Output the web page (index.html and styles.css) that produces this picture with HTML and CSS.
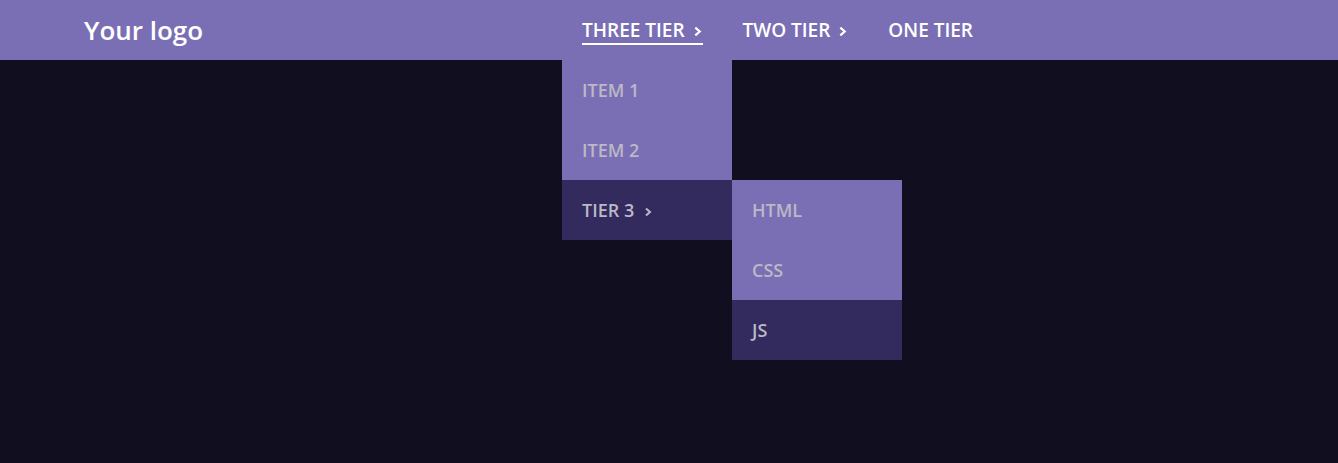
FILE: index.html
```html
<!DOCTYPE html>
<html lang="en">
<head>
    <meta charset="UTF-8">
    <meta name="viewport" content="width=device-width, initial-scale=1.0">
    <title>Multi tier menu</title>
    <link rel="stylesheet" href="styles.css">
</head>
<body>

    <header class="header">
        <div class="logo">Your logo</div>
        <nav>
            <ul class="menu">
                <!-- Menú de tres nivells -->
                <li class="menu-item active">
                    <a href="#">THREE TIER <svg class="chevron" viewBox="0 0 10 10"><path d="M3 1.5 L7 5 L3 8.5"/></svg></a>
                    <ul class="dropdown">
                        <li><a href="#">ITEM 1</a></li>
                        <li><a href="#">ITEM 2</a></li>
                        <li class="dark has-sub">
                            <a href="#">TIER 3 <svg class="chevron" viewBox="0 0 10 10"><path d="M3 1.5 L7 5 L3 8.5"/></svg></a>
                            <ul class="dropdown sub">
                                <li><a href="#">HTML</a></li>
                                <li><a href="#">CSS</a></li>
                                <li class="dark"><a href="#">JS</a></li>
                            </ul>
                        </li>
                    </ul>
                </li>
                <li class="menu-item">
                    <a href="#">TWO TIER <svg class="chevron" viewBox="0 0 10 10"><path d="M3 1.5 L7 5 L3 8.5"/></svg></a>
                </li>
                <li class="menu-item">
                    <a href="#">ONE TIER</a>
                </li>
            </ul>
        </nav>
    </header>

</body>
</html>
```

FILE: styles.css
```css
body {
    font-family: "Open Sans", sans-serif;
    background-color: #100e1f;
    margin: 0;
    height: 100vh;
}
ul {
    list-style: none;
    margin: 0;
    padding: 0;
}
a {
    text-decoration: none;
    color: inherit;
}
.header {
    display: grid;
    grid-template-columns: 478px auto;
    align-items: center;
    height: 60px;
    padding-left: 84px;
    background-color: #7a6fb5;
}
.logo {
    color: white;
    font-size: 26px;
    font-weight: 600;
}
.menu {
    display: flex;
}
.menu-item {
    position: relative;
    height: 60px;
    line-height: 60px;
    padding: 0 20px;
    color: white;
    font-size: 19px;
    font-weight: 600;
}
.menu-item > a {
    display: inline-block;
    line-height: 1;
    padding-bottom: 3px;
    border-bottom: 2px solid transparent;
}
.menu-item.active > a {
    border-bottom-color: white;
}
.chevron {
    width: 11px;
    height: 11px;
    fill: none;
    stroke: currentColor;
    stroke-width: 2;
    margin-left: 2px;
}
.dropdown {
    position: absolute;
    top: 60px;
    left: 0;
    width: 170px;
}
.dropdown li {
    position: relative;
    height: 60px;
    line-height: 60px;
    padding-left: 20px;
    background-color: #7a6fb5;
    color: #bcb9c6;
    font-size: 18px;
    font-weight: 600;
}
.dropdown li.dark {
    background-color: #332b5e;
}
.dropdown .chevron {
    width: 10px;
    height: 10px;
    margin-left: 4px;
}
.dropdown.sub {
    top: 0;
    left: 100%;
}
```
